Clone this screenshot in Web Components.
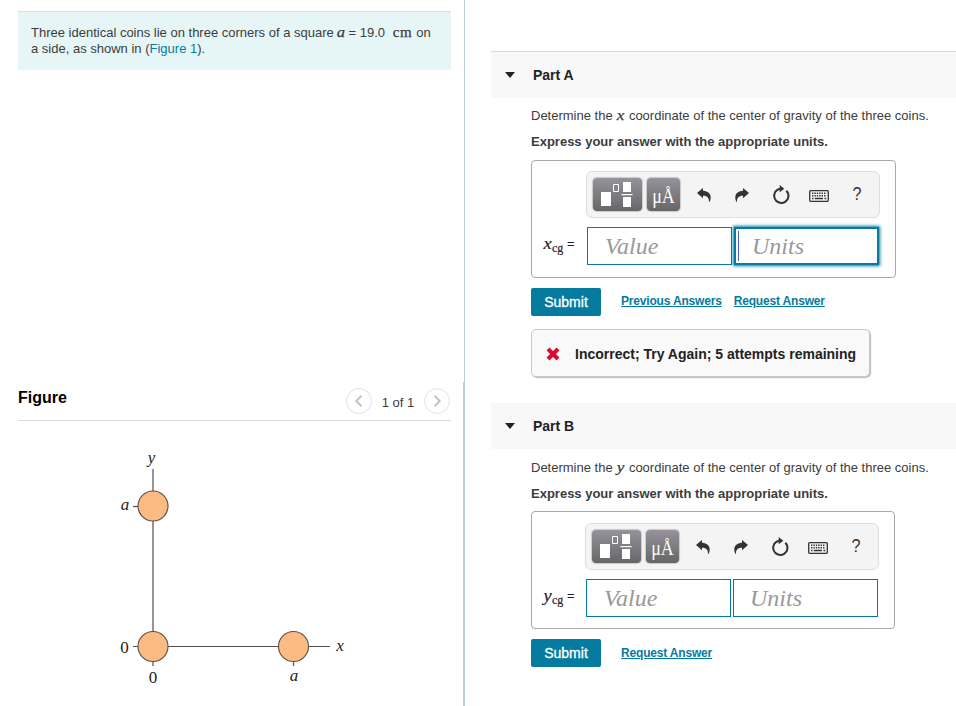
<!DOCTYPE html>
<html lang="en">
<head>
<meta charset="utf-8">
<title>Center of gravity</title>
<style>
  body {
    margin: 0;
    width: 956px;
    height: 706px;
    overflow: hidden;
    background: #ffffff;
    font-family: "Liberation Sans", Arial, sans-serif;
    color: #3c3c3c;
  }
</style>
</head>
<body>
<item-page>
  <problem-intro slot="intro"></problem-intro>
  <figure-panel slot="figure"><coin-diagram></coin-diagram></figure-panel>
  <question-part part-title="Part A" variable="x" class="first">
    <answer-box variable="x" focused></answer-box>
    <answer-actions slot="actions" previous></answer-actions>
    <feedback-note slot="feedback">Incorrect; Try Again; 5 attempts remaining</feedback-note>
  </question-part>
  <question-part part-title="Part B" variable="y">
    <answer-box variable="y"></answer-box>
    <answer-actions slot="actions"></answer-actions>
  </question-part>
</item-page>

<script>
class BaseElement extends HTMLElement {
  constructor() {
    super();
    this._sR = this.attachShadow({ mode: 'open' });
  }

  connectedCallback() {
    this._sR.innerHTML = this.template();
  }
}

// Two columns: problem and figure on the left, questions on the right
class ItemPage extends BaseElement {
  template() {
    return `
      <style>
        :host { display: flex; width: 956px; height: 706px; }
        .left { display: flex; flex-direction: column; width: 465px; }
        .intro {
          box-sizing: border-box;
          height: 382px;
          padding: 11px 13px 0 18px;
          border-right: 1px solid #b9cddd;
        }
        .figure {
          box-sizing: border-box;
          flex: 1;
          border-right: 2px solid #b9cddd;
        }
        .right { flex: 1; padding: 51px 0 0 26px; }
      </style>
      <div class="left">
        <div class="intro"><slot name="intro"></slot></div>
        <div class="figure"><slot name="figure"></slot></div>
      </div>
      <div class="right"><slot></slot></div>
    `;
  }
}

class ProblemIntro extends BaseElement {
  template() {
    return `
      <style>
        :host {
          display: block;
          box-sizing: border-box;
          width: 433px;
          height: 59px;
          padding: 13px 0 0 13px;
          background: #e6f6f7;
          border-top: 1px solid #d5e0e0;
          font-size: 13px;
          line-height: 16px;
          white-space: nowrap;
        }
        i, .unit { font-family: "Liberation Serif", serif; line-height: 1px; -webkit-text-stroke: 0.25px; }
        i { display: inline-block; font-size: 15px; transform: scaleX(1.1); }
        .unit { margin-left: 4px; font-size: 15px; letter-spacing: 0.8px; }
        a { color: #047b9f; }
      </style>
      <div>Three identical coins lie on three corners of a square <i>a</i> = 19.0 <span class="unit">cm</span> on</div>
      <div>a side, as shown in (<a>Figure 1</a>).</div>
    `;
  }
}

class FigurePanel extends BaseElement {
  template() {
    return `
      <style>
        :host { display: block; padding-left: 18px; }
        header {
          display: flex;
          align-items: center;
          box-sizing: border-box;
          width: 433px;
          height: 39px;
          padding-right: 1px;
          border-bottom: 1px solid #dcdcdc;
        }
        h2 { flex: 1; margin: 0; padding-bottom: 7px; font-size: 16px; line-height: 18px; color: #000000; }
        .count { width: 52px; padding-top: 2px; font-size: 13px; text-align: center; }
        .content { display: block; margin: 9px 0 0 82px; }
      </style>
      <header>
        <h2>Figure</h2>
        <svg width="26" height="26" viewBox="0 0 26 26" fill="none">
          <circle cx="13" cy="13" r="12.4" stroke="#e2e2e2"/>
          <path d="M15.5 7.8 L10.3 13 L15.5 18.2" stroke="#c4c4c4" stroke-width="2"/>
        </svg>
        <span class="count">1 of 1</span>
        <svg width="26" height="26" viewBox="0 0 26 26" fill="none">
          <circle cx="13" cy="13" r="12.4" stroke="#e2e2e2"/>
          <path d="M10.5 7.8 L15.7 13 L10.5 18.2" stroke="#c4c4c4" stroke-width="2"/>
        </svg>
      </header>
      <div class="content"><slot></slot></div>
    `;
  }
}

class CoinDiagram extends BaseElement {
  template() {
    return `
      <style>
        :host { display: block; }
        svg { display: block; }
        line { stroke: #4f4f4f; stroke-width: 1.2; }
        circle { fill: #fbbb83; stroke: #5b5048; stroke-width: 1.1; }
        text { font-family: "Liberation Serif", serif; font-size: 17px; fill: #222222; text-anchor: middle; }
        .v { font-style: italic; }
      </style>
      <svg width="260" height="276" viewBox="0 0 260 276">
        <line x1="53" y1="39" x2="53" y2="236"/>
        <line x1="33" y1="216.5" x2="230" y2="216.5"/>
        <line x1="33" y1="76.5" x2="40" y2="76.5"/>
        <line x1="193.5" y1="230" x2="193.5" y2="236"/>
        <circle cx="53" cy="76" r="15"/>
        <circle cx="53" cy="216.5" r="15"/>
        <circle cx="193.5" cy="216.5" r="15"/>
        <text class="v" x="51.5" y="33">y</text>
        <text class="v" x="25" y="80">a</text>
        <text x="24.5" y="223">0</text>
        <text x="53" y="253">0</text>
        <text class="v" x="194" y="251">a</text>
        <text class="v" x="240" y="221">x</text>
      </svg>
    `;
  }
}

// One part of the exercise with its header
class QuestionPart extends BaseElement {
  template() {
    return `
      <style>
        :host { display: block; }
        :host(.first) { height: 352px; }
        header {
          display: flex;
          align-items: center;
          box-sizing: border-box;
          height: 46px;
          padding-left: 14px;
          background: #f8f8f8;
          font-size: 14px;
          font-weight: bold;
          color: #222222;
        }
        header svg { width: 10px; margin-right: 18px; }
        .body { padding-left: 40px; }
        .text { padding-top: 10px; font-size: 13px; line-height: 18px; white-space: nowrap; }
        .text i {
          display: inline-block;
          width: 9px;
          font-family: "Liberation Serif", serif;
          font-size: 15px;
          line-height: 1px;
          text-align: center;
          transform: scaleX(1.15);
          -webkit-text-stroke: 0.25px;
        }
        .hint { margin: 8px 0; font-size: 13px; line-height: 18px; font-weight: bold; white-space: nowrap; }
        :host(.first) header { height: 47px; border-top: 1px solid #d9dddd; }
        :host(.first) .text { padding-top: 9px; }
        :host(.first) .hint { margin-bottom: 9px; }
      </style>
      <header>
        <svg height="6" viewBox="0 0 10 6"><path d="M0 0H10L5 6Z" fill="#222222"/></svg>
        <span>${this.getAttribute('part-title')}</span>
      </header>
      <div class="body">
        <div class="text">Determine the <i>${this.getAttribute('variable')}</i> coordinate of the center of gravity of the three coins.</div>
        <div class="hint">Express your answer with the appropriate units.</div>
        <slot></slot>
        <slot name="actions"></slot>
        <slot name="feedback"></slot>
      </div>
    `;
  }
}

class MathToolbar extends BaseElement {
  template() {
    return `
      <style>
        :host {
          display: flex;
          align-items: center;
          box-sizing: border-box;
          width: 294px;
          height: 47px;
          padding-left: 6px;
          background: #f4f4f4;
          border: 1px solid #dedede;
          border-radius: 6px;
        }
        .key {
          display: flex;
          align-items: center;
          justify-content: center;
          box-sizing: border-box;
          width: 49px;
          height: 33px;
          margin: 0 5px 1px 0;
          border-radius: 4px;
          background: linear-gradient(#96939c, #666666);
          box-shadow: 0 0 1px 1px #c9c9c9;
        }
        .units {
          width: 33px;
          padding-top: 4px;
          color: #ffffff;
          font-family: "Liberation Serif", serif;
          font-size: 18px;
        }
        .units span { transform: scaleY(1.12); }
        .tool { display: flex; justify-content: center; width: 38.3px; padding-top: 1px; }
        .help { padding-top: 0; font-size: 18px; color: #333333; }
        .help span { transform: scaleX(0.9); }
      </style>
      <div class="key">
        <svg width="33" height="27" viewBox="0 0 33 27" fill="#ffffff">
          <path d="M-1 11H9V25H-1Z" transform="translate(1 0)"/>
          <path d="M12.5 3.5H17.5V10.5H12.5Z" fill="none" stroke="#ffffff" stroke-width="1"/>
          <path d="M22 1H30V11H22ZM22 16H30V26H22ZM20.5 13H31.5V14.2H20.5Z"/>
        </svg>
      </div>
      <div class="key units"><span>μÅ</span></div>
      <div class="tool">
        <svg width="14" height="15" viewBox="0 0 42 45" fill="#333333"><path d="M0 15 L18 0 V8 C34 9 42 18 41 30 C41 36 38 41 36 43 C37 30 32 23 18 23 V31Z"/></svg>
      </div>
      <div class="tool">
        <svg width="14" height="15" viewBox="0 0 42 45" fill="#333333"><path d="M42 15 L24 0 V8 C8 9 0 18 1 30 C1 36 4 41 6 43 C5 30 10 23 24 23 V31Z"/></svg>
      </div>
      <div class="tool">
        <svg width="18" height="20" viewBox="0 0 54 60">
          <path d="M43 17 A21.5 21.5 0 1 1 25 11" fill="none" stroke="#333333" stroke-width="6"/>
          <path d="M23 0 L37 11 L23 22Z" fill="#333333"/>
        </svg>
      </div>
      <div class="tool">
        <svg width="20" height="13" viewBox="0 0 20 13" fill="none" stroke="#333333">
          <rect x="0.7" y="1.6" width="18.6" height="10.7" rx="1" stroke-width="1.3"/>
          <path d="M3 4.3H17.5M3 6.7H17.5" stroke-width="1.4" stroke-dasharray="1.4 1"/>
          <path d="M3 9.5H4.5M5.8 9.5H14M15.5 9.5H17.2" stroke-width="1.4"/>
        </svg>
      </div>
      <div class="tool help"><span>?</span></div>
    `;
  }
}

class AnswerBox extends BaseElement {
  template() {
    const first = this.hasAttribute('focused');
    return `
      <style>
        :host {
          display: flex;
          flex-direction: column;
          box-sizing: border-box;
          width: ${first ? 365 : 364}px;
          height: 118px;
          padding-top: ${first ? 10 : 11}px;
          border: 1px solid #a9a9a9;
          border-radius: 4px;
        }
        math-toolbar { margin-left: ${first ? 54 : 53}px; }
        .row { display: flex; margin-top: 9px; }
        .name {
          box-sizing: border-box;
          width: ${first ? 55 : 54}px;
          padding: 9px 0 0 12px;
          font-size: 13px;
          line-height: 16px;
          white-space: nowrap;
          color: #222222;
        }
        .name i, .name sub {
          display: inline-block;
          font-family: "Liberation Serif", serif;
          line-height: 1px;
          -webkit-text-stroke: 0.2px;
        }
        .name i {
          width: 8px;
          font-size: 16px;
          vertical-align: -1px;
          transform: scaleX(1.15);
        }
        .name sub { font-size: 12px; vertical-align: -4px; }
        .field {
          display: flex;
          align-items: center;
          box-sizing: border-box;
          width: 145px;
          height: 38px;
          padding-left: 17px;
          border: 1px solid #047b9f;
          font-family: "Liberation Serif", serif;
          font-size: 24px;
          font-style: italic;
          color: #999999;
        }
        .field + .field { margin-left: 2px; padding-left: 16px; }
        .field + .field.focus {
          padding-left: 2px;
          border-width: 2px;
          box-shadow: 0 0 3px 1px #047b9f;
        }
        .caret { width: 1px; height: 30px; margin-right: 13px; background: #3a5fc8; }
      </style>
      <math-toolbar></math-toolbar>
      <div class="row">
        <div class="name"><i>${this.getAttribute('variable')}</i><sub>cg</sub> =</div>
        <div class="field">Value</div>
        <div class="field ${first ? 'focus' : ''}">${first ? '<span class="caret"></span>' : ''}Units</div>
      </div>
    `;
  }
}

class AnswerActions extends BaseElement {
  template() {
    return `
      <style>
        :host { display: flex; align-items: center; margin-top: 10px; height: 28px; }
        button {
          width: 70px;
          height: 28px;
          margin: 0 20px 0 0;
          padding: 0;
          border: 0;
          border-radius: 2px;
          background: #047b9f;
          color: #ffffff;
          font: 14px "Liberation Sans", Arial, sans-serif;
          -webkit-text-stroke: 0.3px #ffffff;
        }
        a {
          margin: 0 12px 1px 0;
          font-size: 12px;
          font-weight: bold;
          letter-spacing: -0.18px;
          color: #047b9f;
          text-decoration: underline;
          white-space: nowrap;
        }
        :host([previous]) a { margin-bottom: 3px; }
      </style>
      <button>Submit</button>
      ${this.hasAttribute('previous') ? '<a>Previous Answers</a>' : ''}
      <a>Request Answer</a>
    `;
  }
}

class FeedbackNote extends BaseElement {
  template() {
    return `
      <style>
        :host {
          display: flex;
          align-items: center;
          box-sizing: border-box;
          width: 339px;
          height: 48px;
          margin-top: 13px;
          padding: 2px 0 0 14px;
          background: #f9f9f9;
          border: 1px solid #c8c8c8;
          border-radius: 5px;
          box-shadow: 1px 1px 1px #bbbbbb;
          font-size: 14px;
          font-weight: bold;
          color: #222222;
          white-space: nowrap;
        }
        svg { margin-right: 15px; }
      </style>
      <svg width="14" height="14" viewBox="0 0 14 14"><path d="M2 2L12 12M12 2L2 12" stroke="#dd0a2d" stroke-width="4"/></svg>
      <slot></slot>
    `;
  }
}

customElements.define('item-page', ItemPage);
customElements.define('problem-intro', ProblemIntro);
customElements.define('figure-panel', FigurePanel);
customElements.define('coin-diagram', CoinDiagram);
customElements.define('question-part', QuestionPart);
customElements.define('math-toolbar', MathToolbar);
customElements.define('answer-box', AnswerBox);
customElements.define('answer-actions', AnswerActions);
customElements.define('feedback-note', FeedbackNote);
</script>
</body>
</html>
